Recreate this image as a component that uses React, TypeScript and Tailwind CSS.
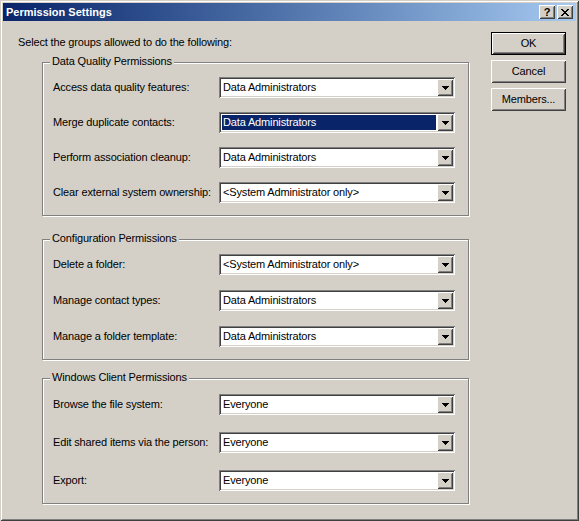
import React from "react";

type Row = { label: string; value: string; selected?: boolean };
type Group = { title: string; box: string; rows: Row[] };

const groups: Group[] = [
    {
        title: "Data Quality Permissions",
        box: "pt-[14px] pb-[12px] gap-y-[14px]",
        rows: [
            { label: "Access data quality features:", value: "Data Administrators" },
            { label: "Merge duplicate contacts:", value: "Data Administrators", selected: true },
            { label: "Perform association cleanup:", value: "Data Administrators" },
            { label: "Clear external system ownership:", value: "<System Administrator only>" },
        ],
    },
    {
        title: "Configuration Permissions",
        box: "mt-[23px] pt-[14px] pb-[12px] gap-y-[15px]",
        rows: [
            { label: "Delete a folder:", value: "<System Administrator only>" },
            { label: "Manage contact types:", value: "Data Administrators" },
            { label: "Manage a folder template:", value: "Data Administrators" },
        ],
    },
    {
        title: "Windows Client Permissions",
        box: "mt-[18px] pt-[15px] pb-[12px] gap-y-[17px]",
        rows: [
            { label: "Browse the file system:", value: "Everyone" },
            { label: "Edit shared items via the person:", value: "Everyone" },
            { label: "Export:", value: "Everyone" },
        ],
    },
];

const raised =
    "shadow-[inset_1px_1px_0_#ffffff,inset_-1px_-1px_0_#404040,inset_2px_2px_0_#d4d0c8,inset_-2px_-2px_0_#808080]";

function Arrow() {
    return (
        <svg width="7" height="4" viewBox="0 0 7 4" shapeRendering="crispEdges">
            <path d="M0 0h7v1H0zM1 1h5v1H1zM2 2h3v1H2zM3 3h1v1H3z" fill="#000" />
        </svg>
    );
}

function Combo({ value, selected }: { value: string; selected?: boolean }) {
    return (
        <div className="flex h-[21px] w-[236px] bg-white p-[2px] shadow-[inset_1px_1px_0_#808080,inset_-1px_-1px_0_#ffffff,inset_2px_2px_0_#404040,inset_-2px_-2px_0_#d4d0c8]">
            <div
                className={
                    selected
                        ? "m-[1px] flex flex-1 items-center bg-[#0a246a] pl-[1px] text-white"
                        : "m-[1px] flex flex-1 items-center pl-[1px] text-black"
                }
            >
                {value}
            </div>
            <div className={`flex h-[17px] w-[16px] items-center justify-center bg-[#d4d0c8] ${raised}`}>
                <Arrow />
            </div>
        </div>
    );
}

function Button({ label, isDefault }: { label: string; isDefault?: boolean }) {
    if (isDefault) {
        return (
            <div className="h-[23px] w-[75px] border border-black">
                <div className={`flex h-full w-full items-center justify-center bg-[#d4d0c8] ${raised}`}>{label}</div>
            </div>
        );
    }
    return <div className={`flex h-[23px] w-[75px] items-center justify-center bg-[#d4d0c8] ${raised}`}>{label}</div>;
}

function CaptionButton({ children }: { children: React.ReactNode }) {
    return <div className={`flex h-[14px] w-[16px] items-center justify-center bg-[#d4d0c8] ${raised}`}>{children}</div>;
}

export default function App() {
    return (
        <div className="flex h-[521px] w-[579px] flex-col bg-[#d4d0c8] p-[3px] font-['Liberation_Sans',Arial,sans-serif] text-[11px] leading-[13px] tracking-[-0.15px] text-black shadow-[inset_1px_1px_0_#d4d0c8,inset_-1px_-1px_0_#404040,inset_2px_2px_0_#ffffff,inset_-2px_-2px_0_#808080]">
            {/* title bar */}
            <div className="flex h-[18px] items-center bg-gradient-to-r from-[#0a246a] to-[#a6caf0] pl-[3px] pr-[3px]">
                <span className="flex-1 text-[11px] font-bold tracking-normal text-white">Permission Settings</span>
                <div className="flex gap-[2px]">
                    <CaptionButton>
                        <span className="text-[11px] font-bold leading-[11px]">?</span>
                    </CaptionButton>
                    <CaptionButton>
                        <svg width="8" height="7" viewBox="0 0 8 7" shapeRendering="crispEdges">
                            <path d="M0 0h2v1H0zM6 0h2v1H6zM1 1h2v1H1zM5 1h2v1H5zM2 2h4v1H2zM3 3h2v1H3zM2 4h4v1H2zM1 5h2v1H1zM5 5h2v1H5zM0 6h2v1H0zM6 6h2v1H6z" fill="#000" />
                        </svg>
                    </CaptionButton>
                </div>
            </div>

            <div className="flex flex-1 pl-[15px]">
                <div className="flex w-[452px] flex-col pt-[15px]">
                    <div>Select the groups allowed to do the following:</div>
                    <div className="ml-[24px] mt-[13px] flex w-[427px] flex-col">
                        {groups.map((g) => (
                            <div
                                key={g.title}
                                className={`relative grid grid-cols-[166px_236px] items-center border border-[#808080] pl-[10px] shadow-[1px_1px_0_#ffffff,inset_1px_1px_0_#ffffff] ${g.box}`}
                            >
                                <span className="absolute left-[7px] top-[-8px] bg-[#d4d0c8] px-[2px]">{g.title}</span>
                                {g.rows.map((r) => (
                                    <React.Fragment key={r.label}>
                                        <span>{r.label}</span>
                                        <Combo value={r.value} selected={r.selected} />
                                    </React.Fragment>
                                ))}
                            </div>
                        ))}
                    </div>
                </div>
                <div className="ml-[21px] flex flex-col gap-[5px] pt-[11px]">
                    <Button label="OK" isDefault />
                    <Button label="Cancel" />
                    <Button label="Members..." />
                </div>
            </div>
        </div>
    );
}
